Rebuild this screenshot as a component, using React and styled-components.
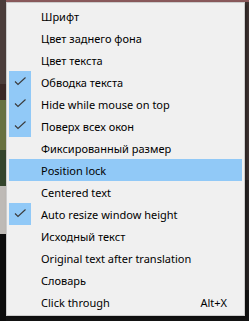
import React from 'react';
import styled, { createGlobalStyle } from 'styled-components';

const GlobalStyle = createGlobalStyle`
  html, body {
    margin: 0;
    height: 100%;
  }
  body {
    background:
      linear-gradient(to bottom, #4b3d3b 0 84px, #3a2826 84px 100px, #68713f 100px 150px, #34452c 150px 186px, #bebab6 186px 234px, #0d0d0d 234px) left top / 6px 100% no-repeat,
      linear-gradient(to bottom, #8a5a5c 0 2px, #3f3432 2px 180px, #2a2626 180px 290px, #141414 290px);
    font-family: "Noto Sans", "Liberation Sans", sans-serif;
  }
`;

const Menu = styled.ul`
  list-style: none;
  margin: 2px 0 0 6px;
  padding: 2px;
  width: 239px;
  box-sizing: border-box;
  background: #f0f0f0;
  border: 1px solid #cccccc;
  box-shadow: 2px 2px 3px rgba(0, 0, 0, 0.35);
`;

const Item = styled.li`
  display: grid;
  grid-template-columns: 22px 1fr auto;
  align-items: center;
  height: 22px;
  background: ${props => (props.active ? '#91c9f7' : 'transparent')};
  color: #000;
  font-size: 11px;
  white-space: nowrap;
`;

const Check = styled.span`
  width: 22px;
  height: 22px;
  display: flex;
  align-items: center;
  justify-content: center;
  background: ${props => (props.checked ? '#91c9f7' : 'transparent')};
`;

const Label = styled.span`
  padding-left: 10px;
`;

const Shortcut = styled.span`
  padding: 0 15px 0 16px;
`;

const items = [
  { label: 'Шрифт' },
  { label: 'Цвет заднего фона' },
  { label: 'Цвет текста' },
  { label: 'Обводка текста', checked: true },
  { label: 'Hide while mouse on top', checked: true },
  { label: 'Поверх всех окон', checked: true },
  { label: 'Фиксированный размер' },
  { label: 'Position lock', active: true },
  { label: 'Centered text' },
  { label: 'Auto resize window height', checked: true },
  { label: 'Исходный текст' },
  { label: 'Original text after translation' },
  { label: 'Словарь' },
  { label: 'Click through', shortcut: 'Alt+X' },
];

const CheckMark = () => (
  <svg width="22" height="22" viewBox="0 0 22 22">
    <path d="M6 10.5 L9 13.5 L16.5 6.5" fill="none" stroke="#3a3a3a" strokeWidth="1.1" />
  </svg>
);

const App = () => (
  <>
    <GlobalStyle />
    <Menu>
      {items.map(item => (
        <Item key={item.label} active={item.active}>
          <Check checked={item.checked}>{item.checked && <CheckMark />}</Check>
          <Label>{item.label}</Label>
          <Shortcut>{item.shortcut}</Shortcut>
        </Item>
      ))}
    </Menu>
  </>
);

export default App;
